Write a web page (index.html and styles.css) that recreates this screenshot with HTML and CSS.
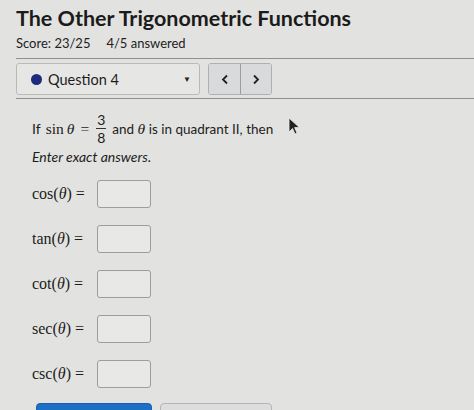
FILE: index.html
```html
<!DOCTYPE html>
<html>
<head>
<meta charset="utf-8">
<link rel="stylesheet" href="styles.css">
</head>
<body>
<div class="page">
  <header class="head">
    <h1 class="title">The Other Trigonometric Functions</h1>
    <div class="score"><span>Score: 23/25</span><span>4/5 answered</span></div>
  </header>
  <div class="toolbar">
    <div class="select">
      <span class="dot"></span>
      <span class="qlabel">Question 4</span>
      <span class="caret">&#9660;</span>
    </div>
    <div class="nav">
      <button class="navbtn"><svg width="8" height="11" viewBox="0 0 8 11"><path d="M6 1.5 L2 5.5 L6 9.5" fill="none" stroke="#222" stroke-width="1.8"/></svg></button>
      <button class="navbtn"><svg width="8" height="11" viewBox="0 0 8 11"><path d="M2 1.5 L6 5.5 L2 9.5" fill="none" stroke="#222" stroke-width="1.8"/></svg></button>
    </div>
  </div>
  <section class="question">
    <div class="prompt"><span>If</span><span class="m sin">sin&thinsp;<i>θ</i></span><span class="m eq">=</span><span class="frac"><span class="num">3</span><span class="den">8</span></span><span class="rest">and <i class="th">θ</i> is in quadrant II, then</span></div>
    <p class="instr">Enter exact answers.</p>
    <div class="answers">
      <div class="row"><span class="lab">cos(<i>θ</i>) =</span><span class="box"></span></div>
      <div class="row"><span class="lab">tan(<i>θ</i>) =</span><span class="box"></span></div>
      <div class="row"><span class="lab">cot(<i>θ</i>) =</span><span class="box"></span></div>
      <div class="row"><span class="lab">sec(<i>θ</i>) =</span><span class="box"></span></div>
      <div class="row"><span class="lab">csc(<i>θ</i>) =</span><span class="box"></span></div>
    </div>
    <div class="actions">
      <button class="btn primary"></button>
      <button class="btn secondary"></button>
    </div>
  </section>
  <svg class="cursor" width="14" height="20" viewBox="0 0 14 20"><path d="M1 1 L1 15 L4.5 11.5 L7 17 L9 16 L6.6 10.6 L11.5 10.6 Z" fill="#222" stroke="#eee" stroke-width="0.8"/></svg>
</div>
</body>
</html>
```
FILE: styles.css
```css
* { box-sizing: border-box; }
html, body { margin: 0; padding: 0; }
body {
  background: #e2e3e0;
  font-family: Lato, "Open Sans", sans-serif;
  color: #1c1c1c;
  width: 474px;
  height: 410px;
  overflow: hidden;
}
.page {
  position: relative;
  padding: 6px 0 0 16px;
}
.title {
  margin: 0;
  font-size: 21.5px;
  line-height: 25px;
  font-weight: 700;
  color: #1b1b1b;
}
.score {
  display: flex;
  gap: 16px;
  font-size: 13px;
  line-height: 18px;
  margin-top: 3px;
  color: #222;
}
.toolbar {
  margin-top: 6px;
  border-top: 1.5px solid #8f908e;
  border-bottom: 1.5px solid #8f908e;
  padding: 4px 0 3px 0;
  display: flex;
  gap: 8px;
}
.select {
  width: 184px;
  height: 32px;
  border: 1px solid #b9bab8;
  border-radius: 3px;
  background: #e6e7e5;
  display: flex;
  align-items: center;
  padding: 0 0 0 14px;
}
.dot {
  width: 11px;
  height: 11px;
  border-radius: 50%;
  background: #1d2b7c;
  margin-right: 6px;
}
.qlabel { font-size: 14.5px; flex: 1; color: #1c1c1c; }
.caret { font-size: 8px; margin-right: 8px; color: #222; }
.nav {
  display: flex;
  height: 32px;
  border: 1px solid #aeb0b1;
  border-radius: 3px;
  overflow: hidden;
}
.navbtn {
  width: 31px;
  height: 30px;
  border: 0;
  background: #d8dadb;
  display: flex;
  align-items: center;
  justify-content: center;
  padding: 0;
}
.navbtn + .navbtn { border-left: 1.5px solid #9a9c9d; }
.question { padding-left: 16px; }
.prompt {
  margin: 14px 0 0 0;
  font-size: 14px;
  line-height: 20px;
  display: flex;
  align-items: center;
  white-space: pre;
}
.m { font-family: "Liberation Serif", "DejaVu Serif", serif; font-size: 15.5px; }
.sin { margin-left: 5px; }
.eq { margin: 0 7px 0 6px; }
.th { font-family: "Liberation Serif", serif; font-size: 15.5px; }
.rest { margin-left: 6px; font-size: 13.5px; }
.frac {
  display: inline-flex;
  flex-direction: column;
  align-items: center;
  font-size: 14px;
  line-height: 14px;
}
.num { border-bottom: 1px solid #333; padding: 0 1px 1px; }
.den { padding-top: 2px; }
.instr {
  margin: 3px 0 0 0;
  font-size: 14px;
  font-style: italic;
  line-height: 18px;
}
.answers {
  margin-top: 14px;
  display: flex;
  flex-direction: column;
  gap: 17px;
}
.row {
  display: flex;
  align-items: center;
  gap: 10px;
}
.lab {
  width: 55px;
  font-family: "Liberation Serif", "DejaVu Serif", serif;
  font-size: 16px;
  white-space: nowrap;
}
.box {
  width: 54px;
  height: 28px;
  border: 1px solid #9d9e9c;
  border-radius: 3px;
  background: #e8e9e7;
}
.actions {
  margin-top: 15px;
  display: flex;
  gap: 8px;
  padding-left: 4px;
}
.btn {
  height: 24px;
  border-radius: 4px;
  padding: 0;
}
.primary { width: 116px; background: #1f6fc4; border: 1px solid #1a5fb0; }
.secondary { width: 112px; background: #dcdddc; border: 1px solid #b5b6b5; }
.cursor { position: absolute; left: 288px; top: 117px; }
```
